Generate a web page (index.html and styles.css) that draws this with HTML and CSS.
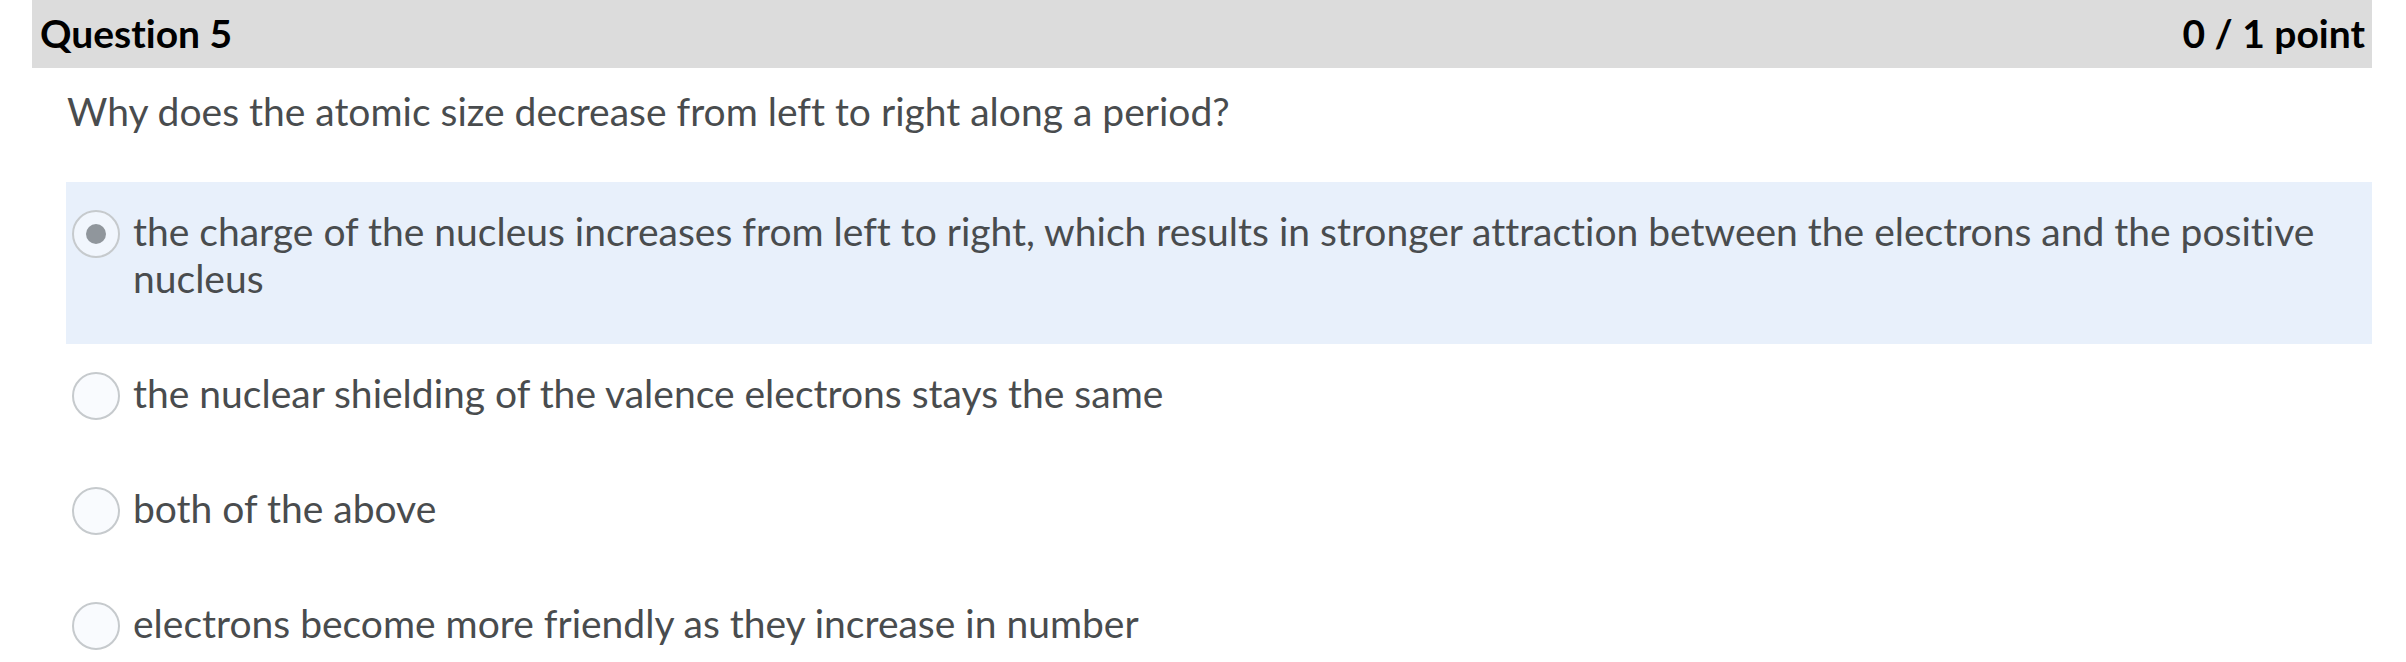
FILE: index.html
```html
<!DOCTYPE html>
<html lang="en">
<head>
<meta charset="utf-8">
<title>Question 5</title>
<link rel="stylesheet" href="styles.css">
</head>
<body>
<div class="quiz">
  <div class="q-header">
    <h2 class="q-title">Question 5</h2>
    <span class="q-score">0 / 1 point</span>
  </div>
  <p class="q-text">Why does the atomic size decrease from left to right along a period?</p>
  <div class="options">
    <div class="option selected">
      <span class="radio"><span class="dot"></span></span>
      <span class="label">the charge of the nucleus increases from left to right, which results in stronger attraction between the electrons and the positive nucleus</span>
    </div>
    <div class="option">
      <span class="radio"></span>
      <span class="label">the nuclear shielding of the valence electrons stays the same</span>
    </div>
    <div class="option">
      <span class="radio"></span>
      <span class="label">both of the above</span>
    </div>
    <div class="option">
      <span class="radio"></span>
      <span class="label">electrons become more friendly as they increase in number</span>
    </div>
  </div>
</div>
</body>
</html>
```
FILE: styles.css
```css
html, body {
  margin: 0;
  padding: 0;
  background: #ffffff;
}
body {
  font-family: Lato, "Open Sans", sans-serif;
  font-variant-ligatures: none;
  color: #494c4e;
  overflow: hidden;
}
.quiz {
  padding: 0 34px 0 32px;
}
.q-header {
  display: flex;
  justify-content: space-between;
  align-items: flex-start;
  height: 68px;
  background: #dcdcdc;
  padding: 10px 7px 0 8px;
  box-sizing: border-box;
}
.q-title, .q-score {
  margin: 0;
  font-size: 39px;
  font-weight: 700;
  color: #000000;
  line-height: 47px;
}
.q-text {
  margin: 20px 0 0 35px;
  font-size: 39px;
  line-height: 47px;
}
.options {
  margin: 47px 0 0 34px;
}
.option {
  display: flex;
  align-items: flex-start;
  padding: 26px 0 42px 6px;
}
.option.selected {
  background: #e8f0fb;
}
.radio {
  flex: none;
  width: 48px;
  height: 48px;
  margin-top: 2px;
  margin-bottom: -3px;
  box-sizing: border-box;
  border: 2px solid #c6cacd;
  border-radius: 50%;
  background: #f9fbfe;
  display: flex;
  align-items: center;
  justify-content: center;
}
.option.selected .radio {
  background: #f1f6fd;
}
.dot {
  width: 20px;
  height: 20px;
  border-radius: 50%;
  background: #90969c;
}
.label {
  margin-left: 13px;
  font-size: 39px;
  line-height: 47px;
  padding-right: 20px;
}
```
